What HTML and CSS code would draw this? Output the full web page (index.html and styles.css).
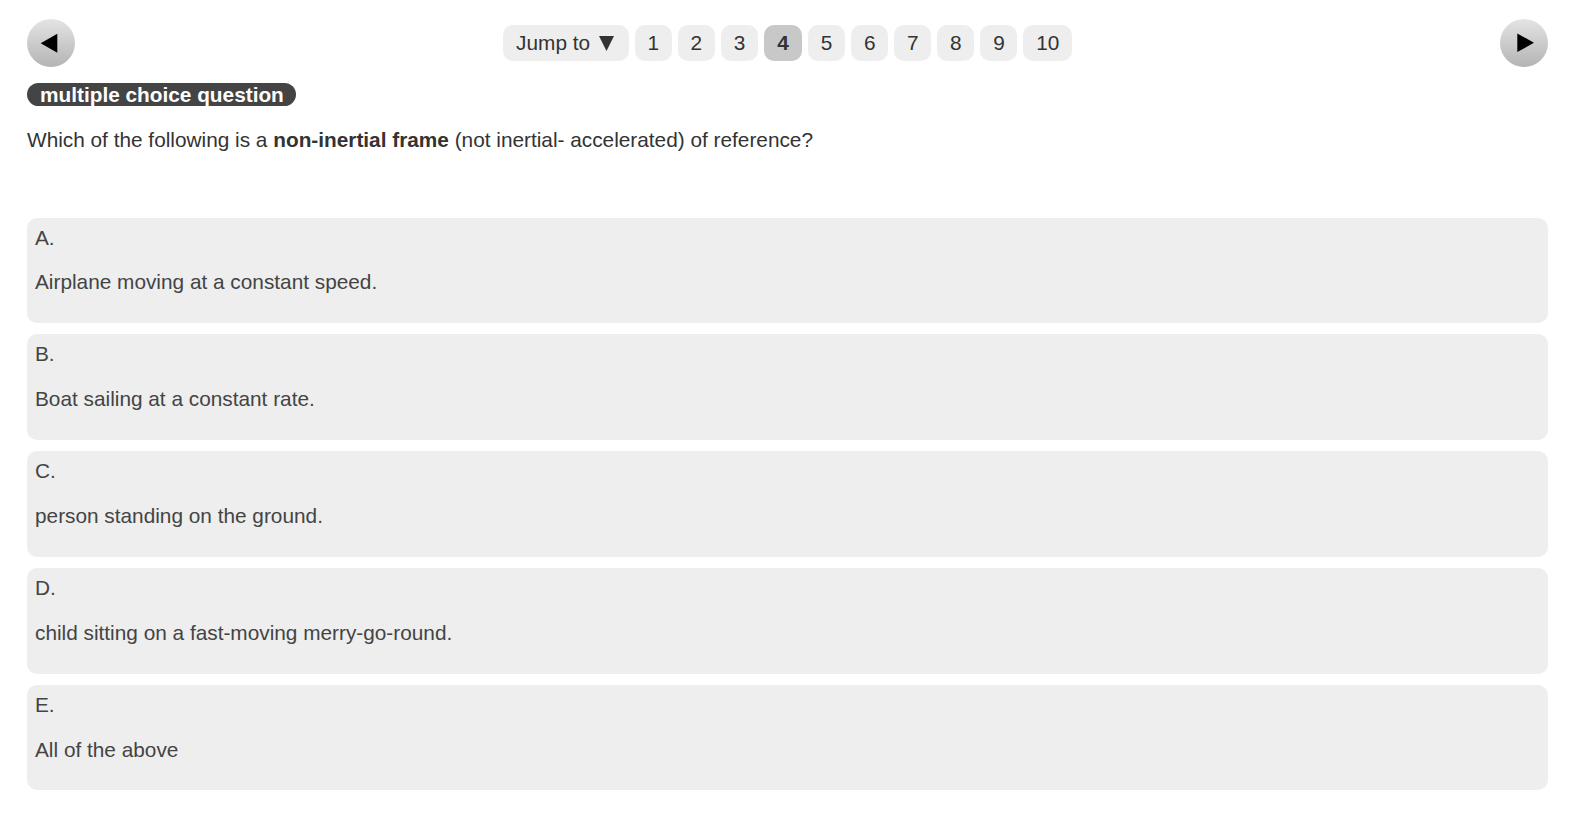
FILE: index.html
```html
<!DOCTYPE html>
<html lang="en">
<head>
<meta charset="utf-8">
<title>Question 4</title>
<link rel="stylesheet" href="styles.css">
</head>
<body>
<nav class="nav">
  <button class="arrow" aria-label="Previous"><svg class="arrow-icon" width="48" height="48" viewBox="0 0 48 48"><path d="M30.3 14.7V33.7L13.7 24.2z"/></svg></button>
  <div class="pages">
    <span class="page jump">Jump to<svg class="caret" width="15" height="15" viewBox="0 0 15 15"><path d="M0 0H15L7.5 15z"/></svg></span>
    <span class="page">1</span><span class="page">2</span><span class="page">3</span><span class="page current">4</span><span class="page">5</span><span class="page">6</span><span class="page">7</span><span class="page">8</span><span class="page">9</span><span class="page">10</span>
  </div>
  <button class="arrow" aria-label="Next"><svg class="arrow-icon" width="48" height="48" viewBox="0 0 48 48"><path d="M17.3 14.4V33.1L34 23.8z"/></svg></button>
</nav>
<div class="badge">multiple choice question</div>
<p class="question">Which of the following is a <strong>non-inertial frame</strong> (not inertial- accelerated) of reference?</p>
<div class="choices">
  <div class="choice"><p>A.</p><p>Airplane moving at a constant speed.</p></div>
  <div class="choice"><p>B.</p><p>Boat sailing at a constant rate.</p></div>
  <div class="choice"><p>C.</p><p>person standing on the ground.</p></div>
  <div class="choice"><p>D.</p><p>child sitting on a fast-moving merry-go-round.</p></div>
  <div class="choice"><p>E.</p><p>All of the above</p></div>
</div>
</body>
</html>
```
FILE: styles.css
```css
* { box-sizing: border-box; }
html, body { margin: 0; background: #fff; }
body {
  padding: 19px 24px 0 27px;
  font-family: "Liberation Sans", Arial, sans-serif;
  font-size: 20.8px;
  color: #333;
}
p { margin: 0; }
.nav { display: flex; justify-content: space-between; align-items: center; height: 48px; }
.arrow {
  width: 48px; height: 48px; padding: 0; border: 0; border-radius: 50%;
  background: linear-gradient(#e4e4e4, #b4b4b4);
  display: block;
}
.arrow-icon { display: block; filter: blur(0.4px); }
.pages { display: flex; gap: 6px; }
.page {
  height: 36px; padding: 0 12.75px; border-radius: 10px; background: #eee;
  line-height: 36px; color: #333;
}
.jump { display: flex; align-items: center; padding: 0 15.1px 0 13.25px; }
.caret { margin-left: 8.6px; fill: #333; }
.current { padding: 0 13.25px; background: #c8c8c8; font-weight: bold; }
.badge {
  display: inline-block; margin-top: 16px; height: 23px; padding: 0 12.5px 0 13px;
  border-radius: 12px; background: #444; color: #fff;
  font-weight: bold; line-height: 24px; overflow: hidden; vertical-align: top;
}
.question { margin-top: 21px; line-height: 26px; color: #333; }
.choices { margin-top: 64.5px; display: flex; flex-direction: column; gap: 11.1px; }
.choice {
  background: #eee; border-radius: 10px; padding: 8.1px 8px 0; height: 105.7px; color: #444;
  line-height: 24px;
}
.choice p + p { margin-top: 20.8px; }
```
